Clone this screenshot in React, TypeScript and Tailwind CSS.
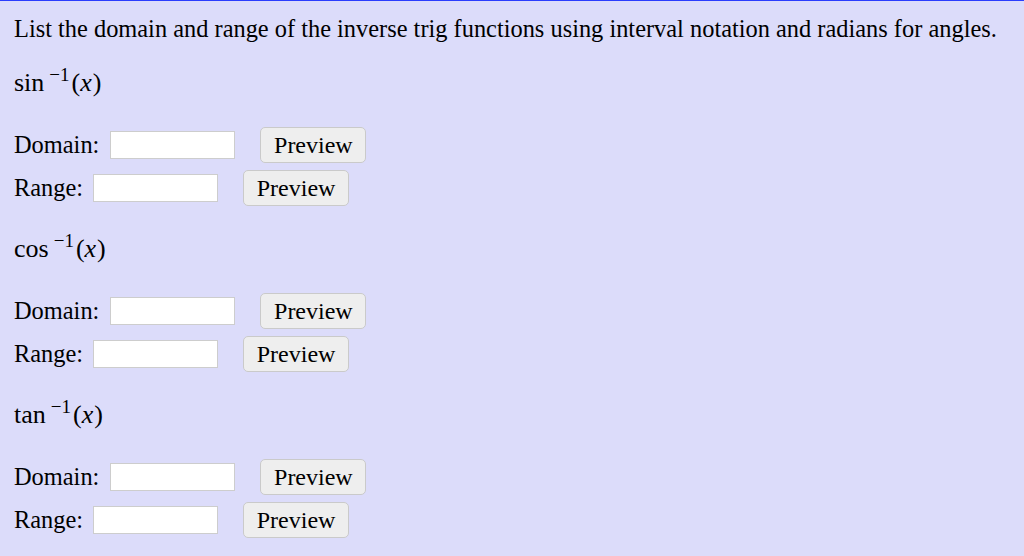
import React from 'react';

const funcs = ['sin', 'cos', 'tan'];

function MathLabel({ name }: { name: string }) {
  return (
    <div className="flex h-[36px] items-center text-[26px] leading-none">
      <span>{name}</span>
      <span className="ml-[5px] -translate-y-[9px] text-[19px]">−1</span>
      <span className="ml-[2px]">(</span>
      <span className="italic">x</span>
      <span className="ml-[1px]">)</span>
    </div>
  );
}

function AnswerRow({ label, wide }: { label: string; wide: boolean }) {
  return (
    <div className="flex h-[36px] items-center">
      <span className="leading-none">{label}</span>
      <input
        type="text"
        className={`${wide ? 'ml-[11px]' : 'ml-[10px]'} h-[28px] w-[125px] border border-[#cdcdcd] bg-white outline-none`}
      />
      <button className="ml-[25px] h-[36px] w-[106px] rounded-[5px] border border-[#cacaca] bg-[#eeeeee] font-['Liberation_Serif',serif] text-[24px] leading-none text-black">
        Preview
      </button>
    </div>
  );
}

export default function App() {
  return (
    <div className="h-[556px] w-[1024px] overflow-hidden border-t border-[#2b3dfd] bg-[#dcdcfa] px-[14px] pt-[14px] font-['Liberation_Serif',serif] text-[24.4px] text-black">
      <p className="h-[28px] leading-[28px] whitespace-nowrap">
        List the domain and range of the inverse trig functions using interval notation and radians for angles.
      </p>
      <div className="mt-[22px] flex flex-col">
        {funcs.map((f, i) => (
          <div key={f} className={i > 0 ? 'mt-[25px]' : ''}>
            <MathLabel name={f} />
            <div className="mt-[26px]">
              <AnswerRow label="Domain:" wide />
            </div>
            <div className="mt-[7px]">
              <AnswerRow label="Range:" wide={false} />
            </div>
          </div>
        ))}
      </div>
    </div>
  );
}
